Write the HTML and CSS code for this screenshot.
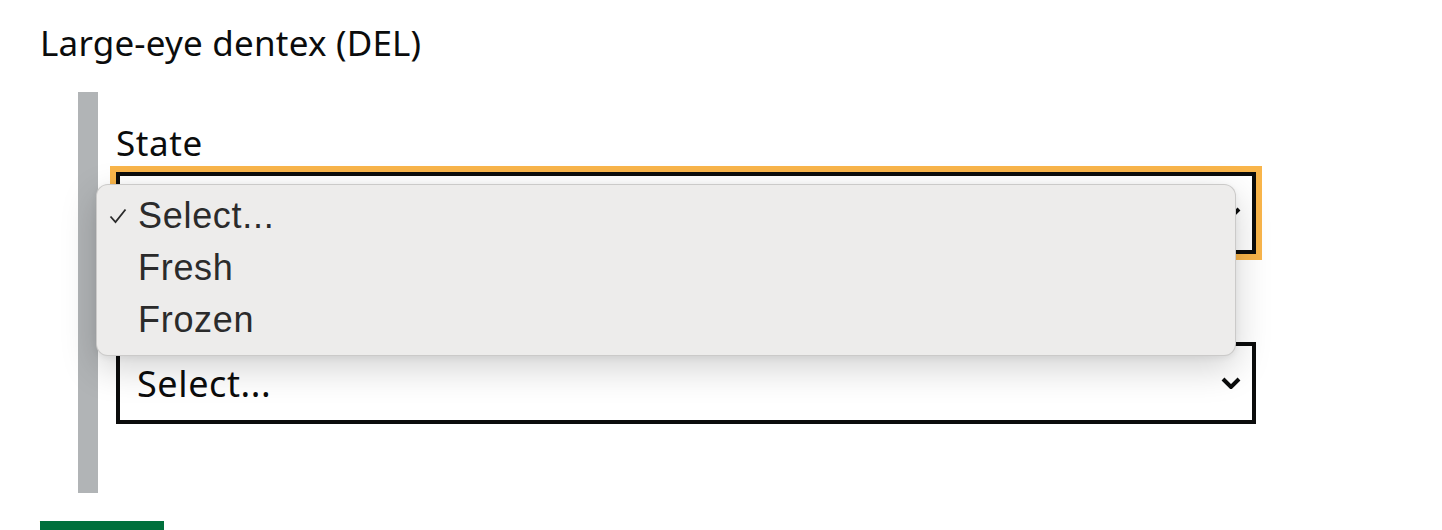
FILE: index.html
```html
<!DOCTYPE html>
<html lang="en">
<head>
<meta charset="utf-8">
<title>Catch details</title>
<link rel="stylesheet" href="styles.css">
</head>
<body>
<div class="page">
  <p class="species">Large-eye dentex (DEL)</p>
  <div class="conditional">
    <div class="form-group">
      <label class="label">State</label>
      <div class="select is-focused">
        <span class="select-value">Select...</span>
        <svg class="chevron" width="20" height="12" viewBox="0 0 20 12"><path d="M2 2 L10 10 L18 2" fill="none" stroke="#0b0c0c" stroke-width="4"/></svg>
      </div>
    </div>
    <div class="form-group second">
      <label class="label">Presentation</label>
      <div class="select">
        <span class="select-value">Select...</span>
        <svg class="chevron" width="20" height="12" viewBox="0 0 20 12"><path d="M2 2 L10 10 L18 2" fill="none" stroke="#0b0c0c" stroke-width="4"/></svg>
      </div>
    </div>
  </div>
  <div class="button">Continue</div>
</div>
<div class="popup">
  <div class="option selected">
    <svg class="check" width="18" height="16" viewBox="0 0 18 16"><path d="M1.5 8.5 L6.5 14 L16.5 1.5" fill="none" stroke="#2b2b2b" stroke-width="1.8"/></svg>
    <span>Select...</span>
  </div>
  <div class="option"><span>Fresh</span></div>
  <div class="option"><span>Frozen</span></div>
</div>
</body>
</html>
```
FILE: styles.css
```css
html, body {
  margin: 0;
  padding: 0;
  background: #ffffff;
  height: 530px;
  overflow: hidden;
}
body {
  font-family: "Noto Sans", "Liberation Sans", sans-serif;
  color: #0b0c0c;
}
.page {
  padding-left: 40px;
}
.species {
  margin: 23px 0 0;
  font-size: 35px;
  line-height: 40px;
  letter-spacing: 0.2px;
}
.conditional {
  margin-top: 29px;
  margin-left: 38px;
  border-left: 20px solid #b1b4b6;
  padding: 31px 0 69px 18px;
}
.form-group.second {
  margin-top: 39px;
}
.label {
  display: block;
  font-size: 35px;
  line-height: 40px;
  letter-spacing: 0.6px;
  margin-bottom: 9px;
}
.select {
  box-sizing: border-box;
  width: 1140px;
  height: 82px;
  border: 4px solid #0b0c0c;
  background: #ffffff;
  display: flex;
  align-items: center;
  justify-content: space-between;
  padding: 0 11px 0 17px;
  font-size: 36px;
  letter-spacing: 0.6px;
}
.select.is-focused {
  outline: 6px solid #f9b54a;
}
.chevron {
  display: block;
}
.button {
  margin-top: 28px;
  width: 124px;
  height: 76px;
  background: #00703c;
  color: #00703c;
  font-size: 1px;
}
.popup {
  position: absolute;
  left: 96px;
  top: 184px;
  width: 1140px;
  height: 172px;
  box-sizing: border-box;
  padding-top: 5px;
  background: #edeceb;
  border: 1px solid rgba(0, 0, 0, 0.14);
  border-radius: 12px;
  box-shadow: 0 12px 36px rgba(0, 0, 0, 0.18), 0 2px 6px rgba(0, 0, 0, 0.06);
  font-family: "Liberation Sans", Arial, sans-serif;
  color: #2b2b2b;
}
.option {
  height: 52px;
  display: flex;
  align-items: center;
  padding-left: 41px;
  position: relative;
  font-size: 36px;
  letter-spacing: 0.7px;
}
.check {
  position: absolute;
  left: 12px;
  top: 18px;
}
```
